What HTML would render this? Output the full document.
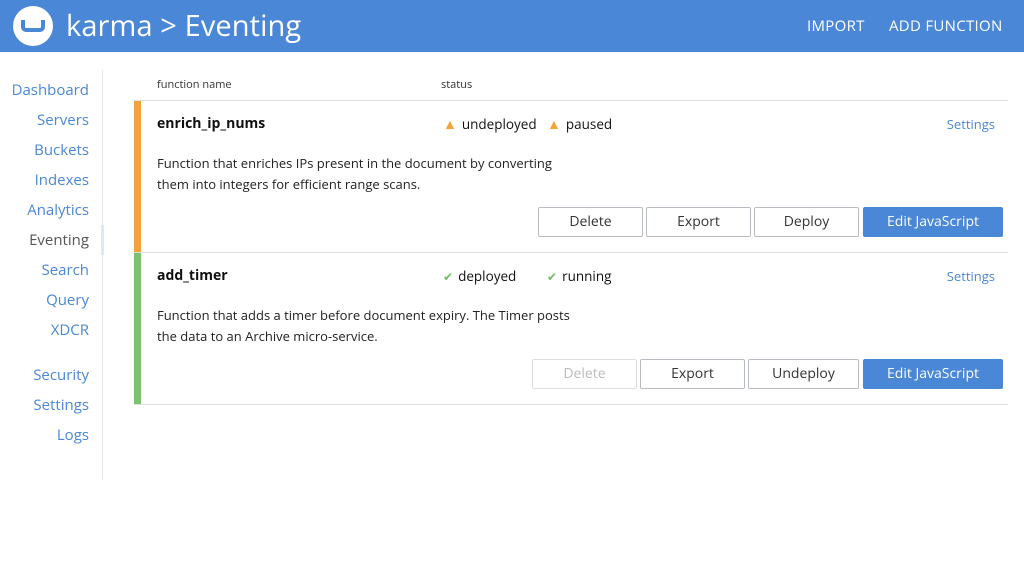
<!DOCTYPE html>
<html><head><style>
*{margin:0;padding:0;box-sizing:border-box}
body{width:1024px;height:564px;background:#fff;font-family:"Open Sans","Liberation Sans",sans-serif;position:relative;overflow:hidden;color:#222}
.hdr{position:absolute;left:0;top:0;width:1024px;height:52px;background:#4a87d6}
.logo{position:absolute;left:13px;top:6px;width:40px;height:40px;border-radius:50%;background:#fff}
.logo div{position:absolute;left:8px;top:14px;width:24px;height:12px;border:4px solid #4a87d6;border-top:none;border-radius:0 0 5px 5px}
.title{position:absolute;left:66px;top:6px;color:#fff;font-size:29px;letter-spacing:0.1px}
.nav{position:absolute;top:16px;color:#fff;font-size:15px;letter-spacing:0.3px}
.side{position:absolute;left:0;top:70px;width:103px;height:410px;border-right:1px solid #e4e4e4}
.side a{position:absolute;right:13px;font-size:15px;color:#4a87d6;text-decoration:none}
.side a.act{color:#555}
.ind{position:absolute;left:101px;top:225px;width:3px;height:30px;background:#dde8f5}
.colh{position:absolute;top:77px;font-size:11px;color:#333}
.card{position:absolute;left:134px;width:874px;height:152px;border-bottom:1px solid #ddd}
.stripe{position:absolute;left:0;top:0;width:7px;height:100%}
.name{position:absolute;left:23px;top:13px;font-size:14px;font-weight:bold;color:#111}
.st{position:absolute;top:14px;font-size:13.5px;color:#111}
.st i{font-style:normal;font-size:14px;margin-right:5px}
.set{position:absolute;right:13px;top:14px;font-size:13px;color:#4a87d6}
.desc{position:absolute;left:23px;top:52px;font-size:13px;line-height:21px;color:#222}
.btn{position:absolute;top:106px;height:30px;width:105px;border:1px solid #b8bcc2;border-radius:2px;font-size:14px;color:#333;text-align:center;line-height:27px;background:#fff}
.btn.p{background:#4a87d6;border-color:#4a87d6;color:#fff;width:140px}
.btn.d{color:#bbb;border-color:#ddd}
</style></head><body>
<div class="hdr">
<div class="logo"><div></div></div>
<div class="title">karma &gt; Eventing</div>
<div class="nav" style="left:807px">IMPORT</div>
<div class="nav" style="left:889px">ADD FUNCTION</div>
</div>
<div class="side">
<a style="top:10px">Dashboard</a>
<a style="top:40px">Servers</a>
<a style="top:70px">Buckets</a>
<a style="top:100px">Indexes</a>
<a style="top:130px">Analytics</a>
<a class="act" style="top:160px">Eventing</a>
<a style="top:190px">Search</a>
<a style="top:220px">Query</a>
<a style="top:250px">XDCR</a>
<a style="top:295px">Security</a>
<a style="top:325px">Settings</a>
<a style="top:355px">Logs</a>
</div>
<div class="ind"></div>
<div class="colh" style="left:157px">function name</div>
<div class="colh" style="left:441px">status</div>
<div style="position:absolute;left:134px;top:100px;width:874px;border-top:1px solid #ddd"></div>
<div class="card" style="top:101px">
<div class="stripe" style="background:#f4a33a"></div>
<div class="name">enrich_ip_nums</div>
<div class="st" style="left:309px"><i style="color:#f4a33a">▲</i>undeployed</div>
<div class="st" style="left:413px"><i style="color:#f4a33a">▲</i>paused</div>
<div class="set">Settings</div>
<div class="desc">Function that enriches IPs present in the document by converting<br>them into integers for efficient range scans.</div>
<div class="btn" style="left:404px">Delete</div>
<div class="btn" style="left:512px">Export</div>
<div class="btn" style="left:620px">Deploy</div>
<div class="btn p" style="left:729px">Edit JavaScript</div>
</div>
<div class="card" style="top:253px">
<div class="stripe" style="background:#7dc36f"></div>
<div class="name">add_timer</div>
<div class="st" style="left:309px"><i style="color:#6cbf5e;font-size:12px">✔</i>deployed</div>
<div class="st" style="left:413px"><i style="color:#6cbf5e;font-size:12px">✔</i>running</div>
<div class="set">Settings</div>
<div class="desc">Function that adds a timer before document expiry. The Timer posts<br>the data to an Archive micro-service.</div>
<div class="btn d" style="left:398px">Delete</div>
<div class="btn" style="left:506px">Export</div>
<div class="btn" style="left:614px;width:111px">Undeploy</div>
<div class="btn p" style="left:729px">Edit JavaScript</div>
</div>
</body></html>
